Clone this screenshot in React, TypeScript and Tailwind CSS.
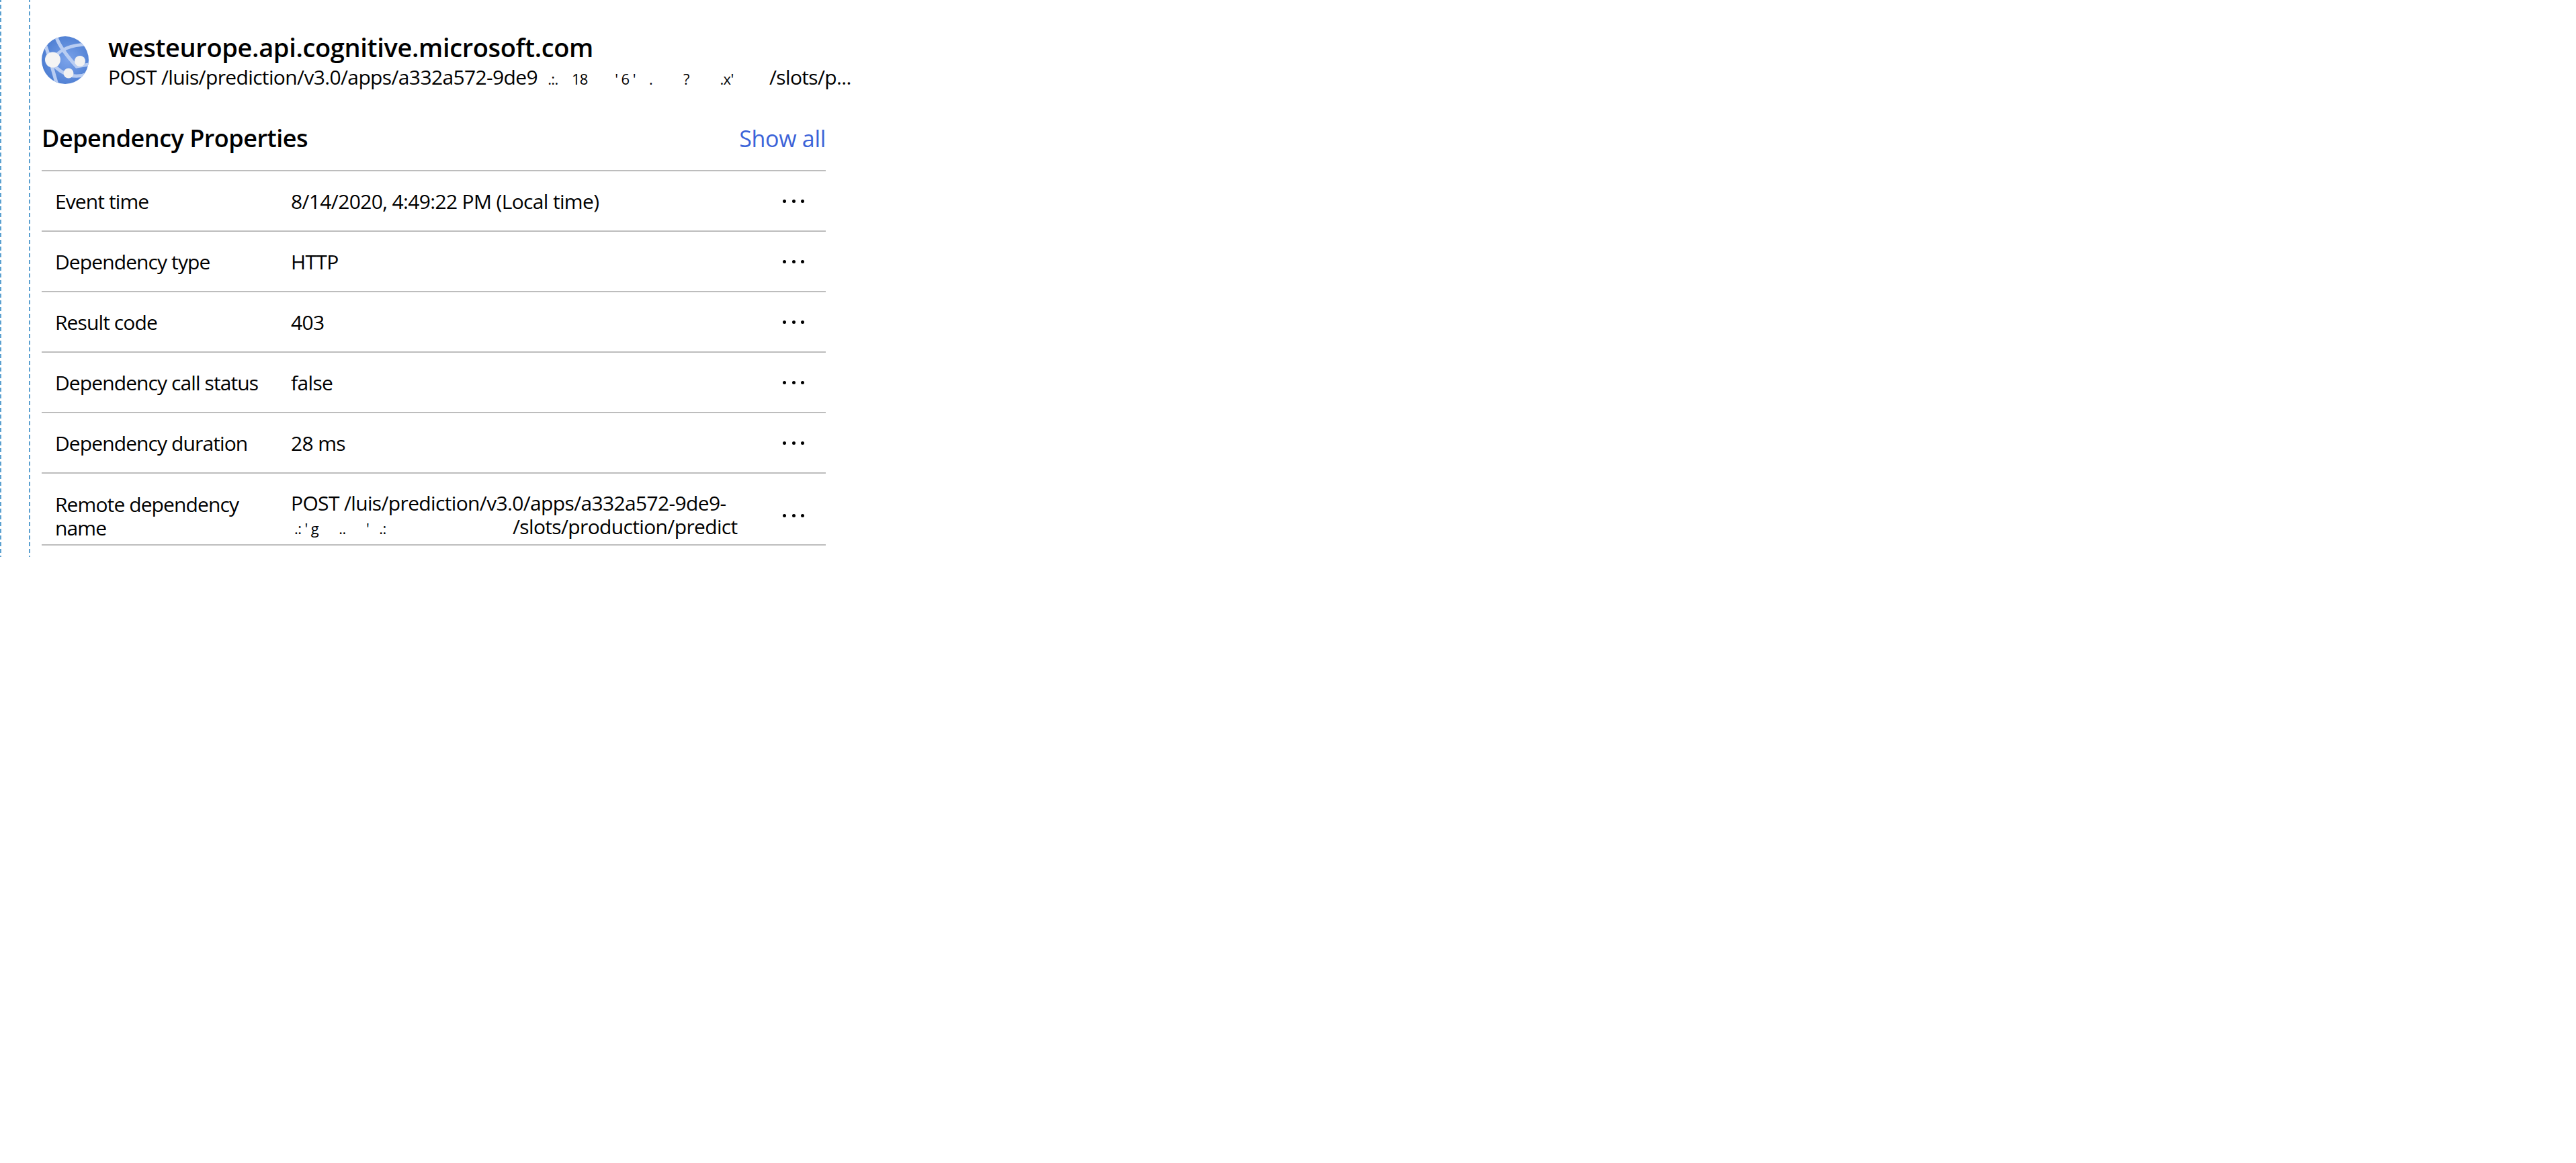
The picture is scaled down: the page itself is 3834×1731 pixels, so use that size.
const rows = [
  { label: 'Event time', value: '8/14/2020, 4:49:22 PM (Local time)' },
  { label: 'Dependency type', value: 'HTTP' },
  { label: 'Result code', value: '403' },
  { label: 'Dependency call status', value: 'false' },
  { label: 'Dependency duration', value: '28 ms' },
];

const dashed =
  'w-[2px] shrink-0 bg-[repeating-linear-gradient(to_bottom,#5ba0d0_0,#5ba0d0_3px,transparent_3px,transparent_7px,#5ba0d0_7px,#5ba0d0_10px)]';

function AppInsightsIcon() {
  return (
    <svg viewBox="0 0 70 71" className="h-[71px] w-[70px] shrink-0">
      <defs>
        <radialGradient id="globe" cx="55%" cy="50%" r="60%">
          <stop offset="0%" stopColor="#7ba3ea" />
          <stop offset="100%" stopColor="#4a7bd0" />
        </radialGradient>
        <clipPath id="globeClip">
          <ellipse cx="35" cy="35.5" rx="35" ry="35.5" />
        </clipPath>
      </defs>
      <ellipse cx="35" cy="35.5" rx="35" ry="35.5" fill="url(#globe)" />
      <g clipPath="url(#globeClip)" fill="none" stroke="#b9cdf2" strokeWidth="5">
        <path d="M22 2 C28 18 40 32 52 45 L70 42" />
        <path d="M17 36 C24 20 44 12 72 12" />
        <path d="M5 12 C12 30 16 50 23 72" />
        <path d="M15 40 C24 50 34 56 42 58 C50 60 58 60 68 56" />
      </g>
      <circle cx="16.5" cy="35" r="11.5" fill="#f4f4f4" />
      <circle cx="57" cy="37" r="8" fill="#f1f1f1" />
      <circle cx="40" cy="55" r="7.5" fill="#f1f1f1" />
    </svg>
  );
}

function Dots() {
  return (
    <div className="mr-[32px] flex w-[32px] shrink-0 justify-between">
      <span className="h-[5px] w-[5px] rounded-full bg-black" />
      <span className="h-[5px] w-[5px] rounded-full bg-black" />
      <span className="h-[5px] w-[5px] rounded-full bg-black" />
    </div>
  );
}

function Smudge({ width, bits }: { width: string; bits: string }) {
  return (
    <span className={`inline-block overflow-hidden whitespace-pre align-baseline text-[22px] ${width}`}>{bits}</span>
  );
}

export default function App() {
  return (
    <div className="flex h-[829px] bg-white font-['Open_Sans',sans-serif] text-black">
      <div className={dashed} />
      <div className="w-[41px] shrink-0" />
      <div className={dashed} />
      <div className="ml-[17px] w-[1167px] shrink-0">
        <header className="mt-[54px] flex w-[1210px] gap-[29px]">
          <AppInsightsIcon />
          <div className="-mt-[7px] min-w-0">
            <h1 className="whitespace-nowrap text-[38px] font-semibold leading-[46px] tracking-[-0.35px]">
              westeurope.api.cognitive.microsoft.com
            </h1>
            <p className="mt-[5px] flex items-baseline whitespace-nowrap text-[30px] leading-[34px] tracking-[-0.64px]">
              POST /luis/prediction/v3.0/apps/a332a572-9de9
              <Smudge width="w-[345px]" bits="   .:.    18        ' 6 '    .         ?         .x'" />
              /slots/p...
            </p>
          </div>
        </header>
        <div className="mt-[49px] flex items-center justify-between border-b-2 border-[#bdbdbd] pb-[24px]">
          <h2 className="text-[36px] font-semibold leading-[46px] tracking-[-0.5px]">Dependency Properties</h2>
          <a className="text-[34px] leading-[46px] tracking-[-0.3px] text-[#3b63d8]">Show all</a>
        </div>
        {rows.map((row) => (
          <div key={row.label} className="flex h-[90px] items-center border-b-2 border-[#bdbdbd] text-[30px]">
            <div className="w-[371px] shrink-0 pl-[20px] tracking-[-0.9px]">{row.label}</div>
            <div className="grow tracking-[-0.65px]">{row.value}</div>
            <Dots />
          </div>
        ))}
        <div className="flex h-[107px] items-center overflow-hidden border-b-2 border-[#bdbdbd] pt-[20px] text-[30px] leading-[35px]">
          <div className="w-[371px] shrink-0 pl-[20px] pr-[60px] tracking-[-0.9px]">Remote dependency name</div>
          <div className="grow tracking-[-0.65px]">
            POST /luis/prediction/v3.0/apps/a332a572-9de9-
            <br />
            <span className="flex items-baseline whitespace-nowrap">
              <Smudge width="w-[330px]" bits=" .: ' g      ..      '   .:" />
              /slots/production/predict
            </span>
          </div>
          <Dots />
        </div>
      </div>
    </div>
  );
}
